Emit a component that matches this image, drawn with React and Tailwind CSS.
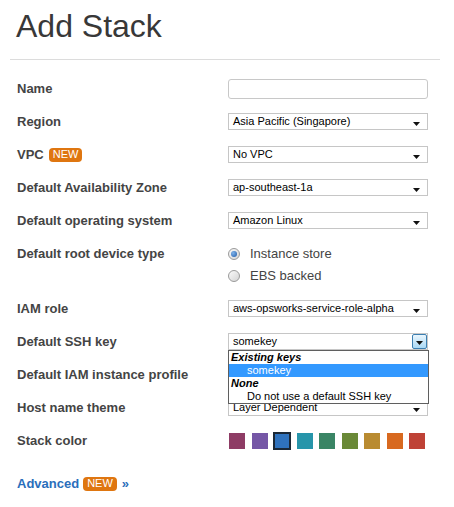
import React from 'react';

const font = { fontFamily: '"Liberation Sans", Arial, sans-serif' };

const swatches = [
  '#8e3c65', '#7557a6', '#2f72bd', '#2795aa', '#3a8565',
  '#6a8937', '#b98b31', '#d8691f', '#bf4236',
];

function Arrow({ className = 'absolute right-[7px] bottom-[3px]' }) {
  return (
    <svg width="7" height="4" viewBox="0 0 7 4" className={className}>
      <path d="M0 0h7L3.5 4z" fill="#111" />
    </svg>
  );
}

function Select({ value, focused, children }) {
  return (
    <div className="relative w-[200px] h-[17px] border border-[#c6c6c6] bg-white pl-[4px] text-[11px] leading-[15px] text-black">
      {value}
      {focused ? (
        <span className="absolute right-0 top-0 w-[15px] h-[15px] rounded-[2px] border border-[#3c7fb1] bg-gradient-to-b from-[#eaf6fd] to-[#a9d8f4]">
          <Arrow className="absolute left-[3px] top-[6px]" />
        </span>
      ) : (
        <Arrow />
      )}
      {children}
    </div>
  );
}

function Badge() {
  return (
    <span className="inline-flex items-center justify-center h-[14px] px-[4px] rounded-[4px] bg-[#df7610] text-white text-[11px] font-normal leading-none">
      NEW
    </span>
  );
}

function Radio({ checked, label }) {
  return (
    <div className="flex items-center h-[15px]">
      <span className="flex items-center justify-center w-[12px] h-[12px] rounded-full border border-[#9a9a9a] bg-gradient-to-br from-[#fafafa] to-[#d4d4d4]">
        {checked && <span className="w-[6px] h-[6px] rounded-full bg-[radial-gradient(circle_at_35%_35%,#7fb3ea,#1f5aa8)]" />}
      </span>
      <span className="ml-[10px] text-[13px] leading-[15px] text-[#444]">{label}</span>
    </div>
  );
}

function Row({ label, children, className = '' }) {
  return (
    <div className={`flex items-center h-[33px] ${className}`}>
      <div className="w-[211px] shrink-0 text-[13px] font-bold text-[#444] flex items-center gap-[5px]">{label}</div>
      <div className="flex items-center">{children}</div>
    </div>
  );
}

export default function App() {
  return (
    <div className="w-[454px] h-[507px] bg-white overflow-hidden" style={font}>
      <h1 className="mt-[8px] ml-[16px] h-[37px] text-[32px] leading-[37px] text-[#383838] font-normal">Add Stack</h1>
      <div className="mt-[14px] ml-[10px] mr-[14px] h-px bg-[#dcdcdc]" />

      <div className="mt-[12px] pl-[17px]">
        <Row label="Name">
          <div className="w-[200px] h-[20px] rounded-[3px] border border-[#c8c8c8] bg-white" />
        </Row>
        <Row label="Region">
          <Select value="Asia Pacific (Singapore)" />
        </Row>
        <Row label={<><span>VPC</span><Badge /></>}>
          <Select value="No VPC" />
        </Row>
        <Row label="Default Availability Zone">
          <Select value="ap-southeast-1a" />
        </Row>
        <Row label="Default operating system">
          <Select value="Amazon Linux" />
        </Row>

        <div className="flex h-[55px]">
          <div className="w-[211px] shrink-0 h-[33px] flex items-center text-[13px] font-bold text-[#444]">Default root device type</div>
          <div className="flex flex-col pt-[9px] gap-[7px]">
            <Radio checked label="Instance store" />
            <Radio label="EBS backed" />
          </div>
        </div>

        <Row label="IAM role">
          <Select value="aws-opsworks-service-role-alpha" />
        </Row>
        <Row label="Default SSH key" className="relative z-10">
          <Select value="somekey" focused>
            <div className="absolute left-[-1px] top-[16px] w-[201px] border border-[#5f5f5f] bg-white text-[11px] leading-[13px] text-black">
              <div className="pl-[2px] font-bold italic">Existing keys</div>
              <div className="pl-[18px] bg-[#3399ff] text-white">somekey</div>
              <div className="pl-[2px] font-bold italic">None</div>
              <div className="pl-[18px]">Do not use a default SSH key</div>
            </div>
          </Select>
        </Row>
        <Row label="Default IAM instance profile">
          <Select value="" />
        </Row>
        <Row label="Host name theme">
          <Select value="Layer Dependent" />
        </Row>
        <Row label="Stack color">
          <div className="flex items-center gap-[6.5px] pl-[1px]">
            {swatches.map((c, i) => (
              <span
                key={c}
                className={`block w-[16px] h-[16px] ${i === 2 ? 'border border-[#1b2836] outline outline-1 outline-[#1b2836]' : ''}`}
                style={{ backgroundColor: c }}
              />
            ))}
          </div>
        </Row>

        <div className="mt-[17px] flex items-center gap-[4px] text-[13px] font-bold text-[#2a6ebb]">
          <span>Advanced</span>
          <Badge />
          <span className="ml-[1px]">»</span>
        </div>
      </div>
    </div>
  );
}
